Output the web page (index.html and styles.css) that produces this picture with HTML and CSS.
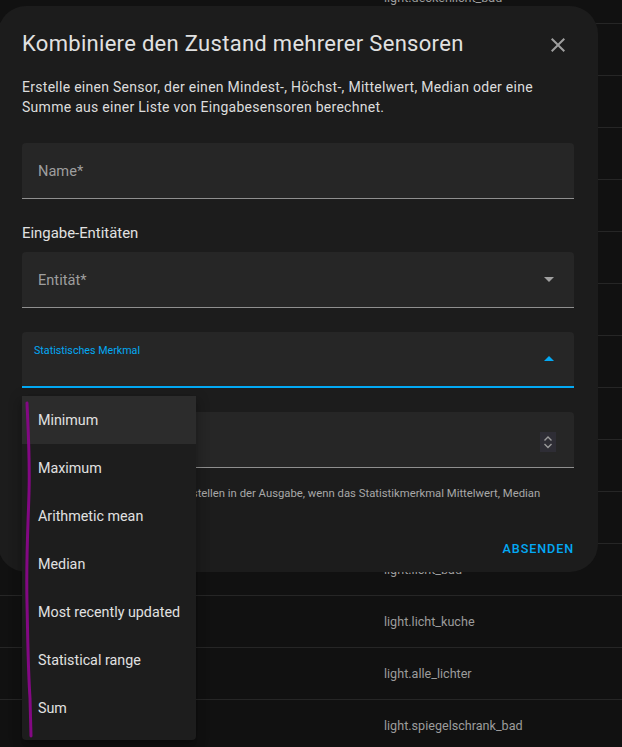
FILE: index.html
```html
<!DOCTYPE html>
<html lang="de">
<head>
	<meta charset="UTF-8">
	<meta name="viewport" content="width=device-width, initial-scale=1.0">
	<title>Kombiniere den Zustand mehrerer Sensoren</title>
	<link rel="stylesheet" href="styles.css">
</head>

<body>
	<!-- entity list behind the dialog -->
	<div class="entity-list">
		<div class="entity-row"><span>light.deckenlicht_bad</span></div>
		<div class="entity-row"><span>light.deckenlicht_flur</span></div>
		<div class="entity-row"><span>light.deckenlicht_kuche</span></div>
		<div class="entity-row"><span>light.esstisch</span></div>
		<div class="entity-row"><span>light.flur_oben</span></div>
		<div class="entity-row"><span>light.gartenlicht</span></div>
		<div class="entity-row"><span>light.kinderzimmer</span></div>
		<div class="entity-row"><span>light.lampe_sofa</span></div>
		<div class="entity-row"><span>light.leselampe</span></div>
		<div class="entity-row"><span>light.licht_arbeitszimmer</span></div>
		<div class="entity-row"><span>light.licht_balkon</span></div>
		<div class="entity-row"><span>light.licht_bad</span></div>
		<div class="entity-row"><span>light.licht_kuche</span></div>
		<div class="entity-row"><span>light.alle_lichter</span></div>
		<div class="entity-row"><span>light.spiegelschrank_bad</span></div>
	</div>

	<!-- dialog -->
	<div class="dialog">
		<div class="dialog-header">
			<h2 class="dialog-title">Kombiniere den Zustand mehrerer Sensoren</h2>
			<svg class="close-icon" viewBox="0 0 24 24" width="24" height="24">
				<path d="M19,6.41L17.59,5L12,10.59L6.41,5L5,6.41L10.59,12L5,17.59L6.41,19L12,13.41L17.59,19L19,17.59L13.41,12L19,6.41Z"/>
			</svg>
		</div>
		<p class="dialog-desc">Erstelle einen Sensor, der einen Mindest-, Höchst-, Mittelwert, Median oder eine Summe aus einer Liste von Eingabesensoren berechnet.</p>

		<div class="field field-name">
			<span class="field-label">Name*</span>
		</div>

		<div class="section-label">Eingabe-Entitäten</div>
		<div class="field field-entity">
			<span class="field-label">Entität*</span>
			<span class="arrow-down"></span>
		</div>

		<div class="field field-focused">
			<span class="float-label">Statistisches Merkmal</span>
			<span class="arrow-up"></span>
		</div>

		<div class="field field-number">
			<span class="field-label">Präzision</span>
			<svg class="spinner" viewBox="0 0 16 20" width="16" height="20">
				<polyline points="4.5,8.5 8,5 11.5,8.5"/>
				<polyline points="4.5,12 8,15.5 11.5,12"/>
			</svg>
		</div>
		<p class="helper">Steuert die Anzahl der Dezimalstellen in der Ausgabe, wenn das Statistikmerkmal Mittelwert, Median oder Summe ist.</p>

		<div class="dialog-actions">
			<span class="btn-text">Absenden</span>
		</div>
	</div>

	<!-- open select menu -->
	<ul class="menu">
		<li class="menu-item hovered">Minimum</li>
		<li class="menu-item">Maximum</li>
		<li class="menu-item">Arithmetic mean</li>
		<li class="menu-item">Median</li>
		<li class="menu-item">Most recently updated</li>
		<li class="menu-item">Statistical range</li>
		<li class="menu-item">Sum</li>
	</ul>

	<!-- hand drawn marker stroke -->
	<svg class="marker" viewBox="0 0 20 345" width="20" height="345">
		<path d="M7 5 C8 30, 10 60, 9 95 S6 160, 7 205 S8 270, 10 300 L11 338"/>
	</svg>
</body>

</html>
```

FILE: styles.css
```css
* {
	margin: 0;
	padding: 0;
	box-sizing: border-box;
}
body {
	width: 622px;
	height: 747px;
	overflow: hidden;
	position: relative;
	background: #111111;
	font-family: Roboto, "Noto Sans", sans-serif;
	color: #e1e1e1;
}

/* list in background */
.entity-list {
	margin-top: -28px;
}
.entity-row {
	display: flex;
	align-items: center;
	height: 52px;
	padding-left: 384px;
	border-bottom: 1px solid #262626;
	font-size: 12.6px;
	color: #9c9c9c;
}

/* dialog */
.dialog {
	position: absolute;
	left: -2px;
	top: 6px;
	width: 600px;
	height: 566px;
	padding: 0 24px;
	background: #1c1c1c;
	border-radius: 28px;
	display: flex;
	flex-direction: column;
}
.dialog-header {
	display: flex;
	align-items: center;
	justify-content: space-between;
	margin-top: 24px;
	height: 28px;
}
.dialog-title {
	font-size: 22px;
	line-height: 28px;
	font-weight: 400;
	letter-spacing: 0.3px;
	color: #e1e1e1;
}
.close-icon {
	fill: #9e9e9e;
	margin-right: 4px;
	margin-top: 2px;
}
.dialog-desc {
	margin-top: 19px;
	font-size: 14px;
	line-height: 20px;
	letter-spacing: 0.28px;
	color: #dcdcdc;
}

/* text fields */
.field {
	position: relative;
	display: flex;
	align-items: center;
	justify-content: space-between;
	height: 56px;
	padding: 0 16px;
	background: #262626;
	border-radius: 4px 4px 0 0;
	border-bottom: 1px solid #8f8f8f;
}
.field-label {
	font-size: 14.6px;
	color: #9e9e9e;
}
.field-name {
	margin-top: 26px;
}
.section-label {
	margin-top: 24px;
	font-size: 14.9px;
	line-height: 20px;
	color: #e1e1e1;
}
.field-entity {
	margin-top: 9px;
}
.arrow-down {
	width: 0;
	height: 0;
	margin-right: 4px;
	border-left: 5px solid transparent;
	border-right: 5px solid transparent;
	border-top: 5px solid #a0a0a0;
}
.field-focused {
	margin-top: 24px;
	border-bottom: 2px solid #03a9f4;
}
.float-label {
	position: absolute;
	left: 12px;
	top: 12px;
	font-size: 10.7px;
	color: #03a9f4;
}
.arrow-up {
	width: 0;
	height: 0;
	margin-left: auto;
	margin-right: 4px;
	margin-top: -1px;
	border-left: 5px solid transparent;
	border-right: 5px solid transparent;
	border-bottom: 5px solid #03a9f4;
}
.field-number {
	margin-top: 24px;
}
.spinner {
	margin-right: 2px;
	margin-top: 4px;
	background: #2e2d35;
	fill: none;
	stroke: #9a9a9a;
	stroke-width: 1.4;
}
.helper {
	margin-top: 18px;
	padding: 0 16px;
	font-size: 11.3px;
	line-height: 16px;
	color: #a8a8a8;
}

.dialog-actions {
	margin-top: auto;
	margin-right: -8px;
	height: 42px;
	padding-bottom: 6px;
	display: flex;
	align-items: center;
	justify-content: flex-end;
}
.btn-text {
	padding: 0 8px;
	font-size: 12.6px;
	font-weight: 500;
	letter-spacing: 0.9px;
	text-transform: uppercase;
	color: #03a9f4;
}

/* select menu */
.menu {
	position: absolute;
	left: 22px;
	top: 396px;
	width: 174px;
	padding-bottom: 8px;
	list-style: none;
	background: #1d1d1d;
	border-radius: 0 0 4px 4px;
	box-shadow: 0 5px 5px -3px rgba(0, 0, 0, .2), 0 8px 10px 1px rgba(0, 0, 0, .14), 0 3px 14px 2px rgba(0, 0, 0, .12);
}
.menu-item {
	display: flex;
	align-items: center;
	height: 48px;
	padding: 0 16px;
	font-size: 14.3px;
	white-space: nowrap;
	color: #e1e1e1;
}
.menu-item.hovered {
	background: #2c2c2c;
}

.marker {
	position: absolute;
	left: 20px;
	top: 398px;
	fill: none;
	stroke: #830883;
	stroke-width: 3;
	stroke-linecap: round;
}
```
